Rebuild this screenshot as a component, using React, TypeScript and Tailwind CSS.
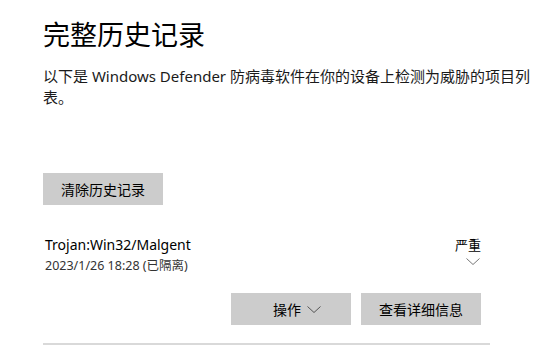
import React from 'react';

const Chevron: React.FC<{ className?: string }> = ({ className }) => (
  <svg viewBox="0 0 14 7" className={className} fill="none">
    <path d="M0.5 0.5 L7 6.5 L13.5 0.5" stroke="currentColor" strokeWidth="1" />
  </svg>
);

const App: React.FC = () => {
  return (
    <div
      className="w-[534px] h-[357px] bg-white text-black pl-[43px] pt-[16px]"
      style={{ fontFamily: '"Noto Sans", "Noto Sans CJK SC", sans-serif' }}
    >
      <h1 className="text-[27px] leading-[38px] font-normal">完整历史记录</h1>
      <p className="mt-[12px] w-[490px] text-[15px] leading-[21px] text-[#1a1a1a]">
        以下是 Windows Defender 防病毒软件在你的设备上检测为威胁的项目列表。
      </p>

      <button className="mt-[65px] w-[120px] h-[32px] bg-[#cccccc] text-[14px] text-black">
        清除历史记录
      </button>

      <div className="w-[447px] mt-[30px]">
        <div className="flex justify-between pr-[9px]">
          <div className="ml-[2px]">
            <div className="text-[14px] leading-[20px]">Trojan:Win32/Malgent</div>
            <div className="mt-[2px] text-[12.5px] leading-[18px] text-[#333333]">
              2023/1/26 18:28 (已隔离)
            </div>
          </div>
          <div className="flex flex-col items-end">
            <div className="text-[13px] leading-[20px]">严重</div>
            <Chevron className="mt-[3px] mr-[1px] w-[14px] h-[7px] text-[#777777]" />
          </div>
        </div>

        <div className="mt-[18px] flex justify-end gap-[10px] pr-[9px]">
          <button className="w-[120px] h-[32px] bg-[#cccccc] text-[14px] flex items-center justify-center gap-[6px] pl-[12px]">
            <span>操作</span>
            <Chevron className="w-[14px] h-[7px] text-[#555555]" />
          </button>
          <button className="w-[120px] h-[32px] bg-[#cccccc] text-[14px]">查看详细信息</button>
        </div>

        <div className="mt-[18px] h-[2px] bg-[#d9d9d9]" />
      </div>
    </div>
  );
};

export default App;
